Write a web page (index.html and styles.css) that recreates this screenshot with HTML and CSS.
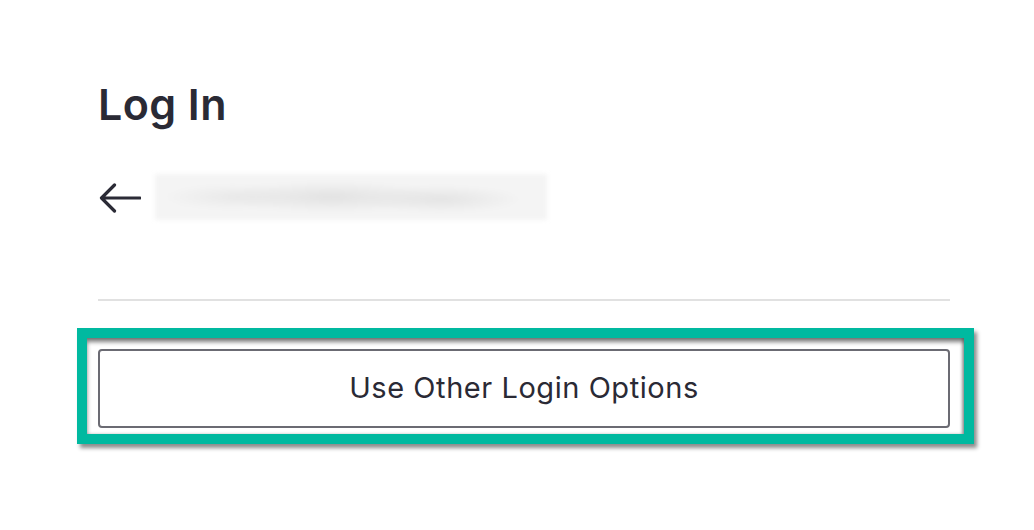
FILE: index.html
```html
<!DOCTYPE html>
<html lang="en">
<head>
<meta charset="utf-8">
<title>Log In</title>
<link rel="stylesheet" href="styles.css">
</head>
<body>
<main class="page">
  <h1 class="title">Log In</h1>
  <div class="back-row">
    <svg class="back-icon" width="42" height="30" viewBox="0 0 42 30" aria-hidden="true">
      <path d="M41 15 H3 M15.5 2 L2.5 15 L15.5 28" fill="none" stroke="#2b2b36" stroke-width="3.2" stroke-linecap="round" stroke-linejoin="round"/>
    </svg>
    <div class="blurred"></div>
  </div>
  <hr class="divider">
  <div class="highlight-wrap">
    <button class="other-btn" type="button">Use Other Login Options</button>
    <div class="highlight"></div>
  </div>
</main>
</body>
</html>
```

FILE: styles.css
```css
html, body {
  margin: 0;
  padding: 0;
  background: #ffffff;
}

body {
  min-height: 530px;
  font-family: Inter, "Noto Sans", "Liberation Sans", sans-serif;
  color: #2a2a35;
}

.page {
  padding: 79px 84px 80px 98px;
}

.title {
  margin: 0;
  font-size: 43px;
  line-height: 50px;
  font-weight: 600;
  letter-spacing: 0.4px;
  color: #2a2a35;
}

.back-row {
  margin-top: 45px;
  display: flex;
  align-items: center;
  height: 46px;
}

.back-icon {
  display: block;
  margin-left: 1px;
  margin-top: 2px;
}

.blurred {
  margin-left: 14px;
  width: 392px;
  height: 46px;
  background:
    radial-gradient(ellipse 110px 16px at 45% 50%, #e2e2e2, rgba(226,226,226,0)),
    radial-gradient(ellipse 80px 14px at 73% 55%, #e4e4e4, rgba(228,228,228,0)),
    radial-gradient(ellipse 70px 13px at 20% 50%, #e9e9e9, rgba(233,233,233,0)),
    #f4f4f4;
  filter: blur(2px);
}

.divider {
  margin: 79px 0 0;
  border: 0;
  height: 2px;
  background: #e1e1e1;
}

.highlight-wrap {
  position: relative;
  margin-top: 48px;
}

.other-btn {
  display: block;
  width: 100%;
  height: 79px;
  box-sizing: border-box;
  background: #ffffff;
  border: 2px solid #6b6b73;
  border-radius: 4px;
  font-family: inherit;
  font-size: 29px;
  font-weight: 400;
  letter-spacing: 0.55px;
  color: #2a2a35;
  padding: 0 0 3px;
  cursor: pointer;
}

.highlight {
  position: absolute;
  left: -21px;
  top: -21px;
  right: -24px;
  bottom: -16px;
  border: 10px solid #00b9a0;
  pointer-events: none;
  box-shadow:
    3px 4px 4px rgba(0, 0, 0, 0.45),
    inset 0 4px 4px rgba(0, 0, 0, 0.5),
    inset -2px 0 3px rgba(0, 0, 0, 0.25);
}
```
